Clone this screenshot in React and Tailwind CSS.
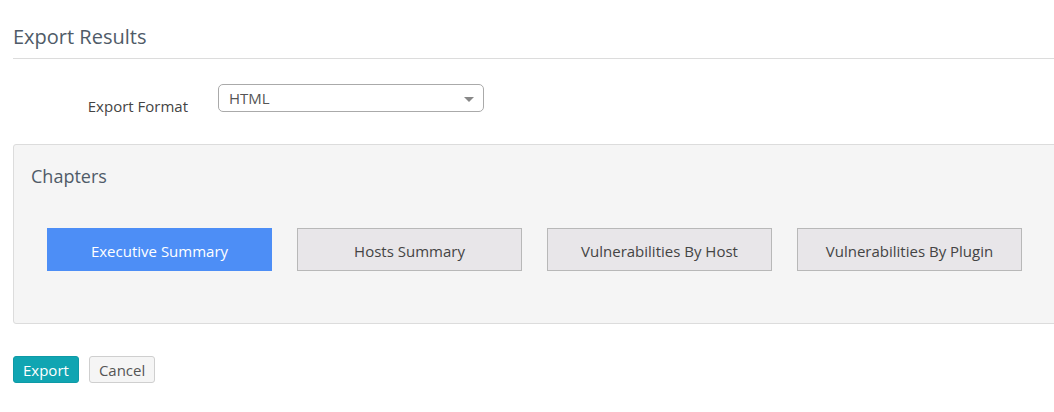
export default function App() {
  const chapters = [
    { id: 'exec', name: 'Executive Summary', active: true },
    { id: 'hosts', name: 'Hosts Summary' },
    { id: 'vuln-host', name: 'Vulnerabilities By Host' },
    { id: 'vuln-plugin', name: 'Vulnerabilities By Plugin' },
  ];

  return (
    <div className="w-full h-[412px] overflow-hidden bg-white font-['Open_Sans',sans-serif] text-[#444]">
      <div className="pl-[13px] w-[1070px]">
        <h2 className="pt-[24px] pb-[8px] text-[20px] leading-[26px] text-[#4f5b68]">Export Results</h2>
        <div className="border-b border-[#dcdcdc]"></div>

        <div className="flex items-start h-[28px] mt-[25px]">
          <label className="w-[175px] text-right text-[15px] leading-[20px] text-[#444] pt-[12px]">Export Format</label>
          <div className="ml-[30px] w-[266px] h-[28px] border border-[#aaa] rounded-[5px] flex items-center justify-between pl-[10px] pr-[9px] bg-white">
            <span className="text-[15px] text-[#555]">HTML</span>
            <span className="w-0 h-0 border-l-[5px] border-r-[5px] border-t-[5px] border-l-transparent border-r-transparent border-t-[#888] mt-[3px]"></span>
          </div>
        </div>

        <div className="mt-[32px] h-[180px] bg-[#f5f5f5] border border-[#dcdcdc] rounded-[3px] px-[33px]">
          <h3 className="pt-[19px] -ml-[16px] text-[18px] leading-[24px] text-[#4f5b68]">Chapters</h3>
          <div className="flex gap-[25px] mt-[40px]">
            {chapters.map((c) => (
              <button
                key={c.id}
                className={
                  c.active
                    ? 'w-[225px] h-[43px] pt-[3px] bg-[#4d8ef6] border border-[#4d8ef6] text-white text-[15px]'
                    : 'w-[225px] h-[43px] pt-[3px] bg-[#e8e6e9] border border-[#b8b8b8] text-[#444] text-[15px]'
                }
              >
                {c.name}
              </button>
            ))}
          </div>
        </div>

        <div className="flex gap-[10px] mt-[32px]">
          <button className="h-[27px] px-[9px] pt-[2px] rounded-[3px] bg-[#10a5b2] border border-[#0e9aa6] text-white text-[15px] leading-none">Export</button>
          <button className="h-[27px] px-[9px] pt-[2px] rounded-[3px] bg-[#f5f5f5] border border-[#cfcfcf] text-[#555] text-[15px] leading-none">Cancel</button>
        </div>
      </div>
    </div>
  );
}
